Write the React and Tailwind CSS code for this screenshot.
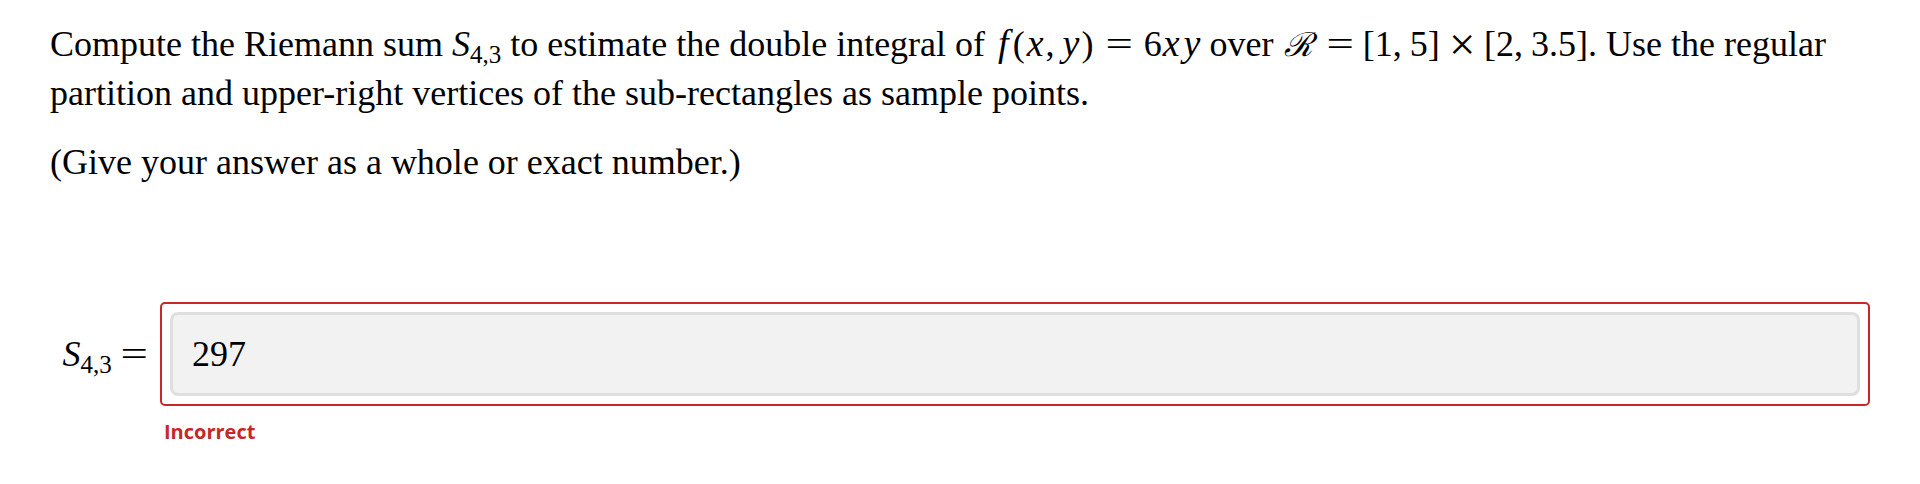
import React from "react";

function S43() {
  return (
    <span className="whitespace-nowrap">
      <span className="italic">S</span>
      <span className="text-[25px] relative top-[7px] leading-none">4,3</span>
    </span>
  );
}

function V({ children, cls = "" }) {
  return <span className={`italic text-[38px] leading-none ${cls}`}>{children}</span>;
}

function Eq({ cls = "" }) {
  return <span className={`inline-block leading-none scale-x-[1.35] ${cls}`}>=</span>;
}

export default function App() {
  return (
    <div className="min-h-screen bg-white pt-[20px] px-[50px] text-black font-['Liberation_Serif','Times_New_Roman',serif] text-[36px] leading-[49px]">
      <p className="whitespace-nowrap">
        Compute the Riemann sum <S43 /> to estimate the double integral of{" "}
        <span className="ml-[4px]">
          <V cls="mr-[4px]">f</V>(<V cls="mx-[2px]">x</V>,<V cls="ml-[8px] mr-[2px]">y</V>)
        </span>
        <Eq cls="ml-[16px] mr-[14px]" />
        6<V cls="ml-[1px]">x</V>
        <V cls="ml-[4px]">y</V> over{" "}
        <span className="font-['DejaVu_Serif',serif] italic text-[33px] leading-none ml-[2px]">ℛ</span>
        <Eq cls="ml-[17px] mr-[12px]" />
        [1,<span className="ml-[8px]">5]</span>
        <span className="inline-block leading-none scale-[1.3] mx-[12px]">×</span>
        [2,<span className="ml-[8px]">3.5].</span> Use the regular
        <br />
        partition and upper-right vertices of the sub-rectangles as sample points.
      </p>
      <p className="mt-[20px] whitespace-nowrap">(Give your answer as a whole or exact number.)</p>
      <div className="mt-[115px] flex items-center">
        <div className="w-[110px] flex items-center justify-end pr-[16px]">
          <S43 />
          <Eq cls="ml-[12px]" />
        </div>
        <div className="flex-1 border-2 border-[#c62828] rounded-[5px] p-[8px]">
          <div className="h-[84px] rounded-[8px] border-[3px] border-[#dfdfdf] bg-[#f2f2f2] flex items-center px-[19px]">
            297
          </div>
        </div>
      </div>
      <div className="ml-[114px] mt-[12px] text-[20px] leading-[28px] font-bold text-[#c62828] font-['Open_Sans',sans-serif]">
        Incorrect
      </div>
    </div>
  );
}
